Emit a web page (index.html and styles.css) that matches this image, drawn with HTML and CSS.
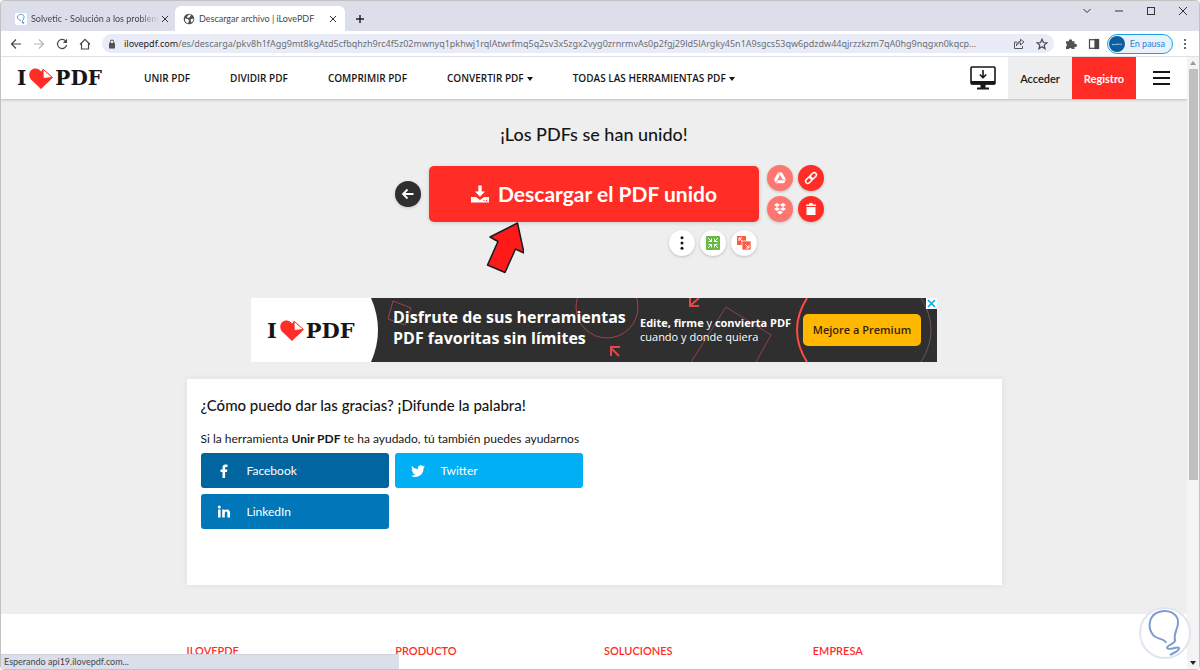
FILE: index.html
```
<!DOCTYPE html>
<html lang="es">
<head>
    <meta charset="UTF-8">
    <meta name="viewport" content="width=device-width, initial-scale=1.0">
    <title>Descargar archivo | iLovePDF</title>
    <link rel="stylesheet" href="styles.css">
</head>
<body>
    <div class="browser">
        <!-- Tabs -->
        <div class="tab-bar">
            <div class="tab">
                <svg class="tab-icon" viewBox="0 0 12 12"><rect width="12" height="12" rx="2" fill="#fff"/><path d="M7.500 8.500C7.500 6.500 9.500 6 9 3.500C8.500 0.500 3 0.500 2.500 4C2 7 5 6.500 6 8M7.500 8.500L7 9.500L9 9.500L8 11" fill="none" stroke="#5a9bd0"/></svg>
                <button class="tab-title tab-title-fade">Solvetic - Solución a los problem</button>
                <button class="tab-close" aria-label="Cerrar"><svg viewBox="0 0 8 8"><path d="M1 1L7 7M7 1L1 7"/></svg></button>
            </div>
            <div class="tab tab-active">
                <svg class="tab-icon" viewBox="0 0 12 12"><circle cx="6" cy="6" r="5.300" fill="#4a4d51"/><path d="M2 5.500L5 6L6 8L5 10.500C3 10 1.600 8 2 5.500ZM6 1.500L8 2L7 4L5 5L3.800 4ZM8 6L10.500 5.500C10.600 7.500 9.500 9 8.500 9.500L7.500 7.500Z" fill="#fff"/></svg>
                <button class="tab-title">Descargar archivo | iLovePDF</button>
                <button class="tab-close" aria-label="Cerrar"><svg viewBox="0 0 8 8"><path d="M1 1L7 7M7 1L1 7"/></svg></button>
            </div>
            <button class="tab-new" aria-label="Nueva pestaña"><svg viewBox="0 0 10 10"><path d="M5 1V9M1 5H9"/></svg></button>
            <div class="window-buttons">
                <button aria-label="Buscar pestañas"><svg viewBox="0 0 10 10"><path d="M1.500 3L5 6.500L8.500 3"/></svg></button>
                <button aria-label="Minimizar"><svg viewBox="0 0 10 10"><path d="M1 5H9"/></svg></button>
                <button aria-label="Maximizar"><svg viewBox="0 0 10 10"><rect x="1.500" y="1.500" width="7" height="7"/></svg></button>
                <button aria-label="Cerrar ventana"><svg viewBox="0 0 10 10"><path d="M1 1L9 9M9 1L1 9"/></svg></button>
            </div>
        </div>

        <!-- Toolbar -->
        <div class="toolbar">
            <button class="tool" aria-label="Atrás"><svg viewBox="0 0 12 12"><path d="M11 6H1.500M6 1.500L1.500 6L6 10.500"/></svg></button>
            <button class="tool tool-off" aria-label="Adelante"><svg viewBox="0 0 12 12"><path d="M1 6H10.500M6 1.500L10.500 6L6 10.500"/></svg></button>
            <button class="tool" aria-label="Recargar"><svg viewBox="0 0 12 12"><path d="M10 3.500A4.600 4.600 0 1 0 10.600 7"/><path d="M11 0.800V5H6.800Z" fill="#45484c" stroke="none"/></svg></button>
            <button class="tool" aria-label="Inicio"><svg viewBox="0 0 12 12"><path d="M1 6.500L6 1.300L11 6.500M2.500 5.500V11H9.500V5.500"/></svg></button>
            <div class="address">
                <svg class="lock" viewBox="0 0 8 10"><rect x="1" y="4" width="6" height="5.500" rx="0.600" fill="#505357"/><path d="M2.300 4V2.700A1.700 1.700 0 0 1 5.700 2.700V4" fill="none" stroke="#505357"/></svg>
                <label class="domain" for="url">ilovepdf.com</label>
                <input class="url" id="url" type="text" value="/es/descarga/pkv8h1fAgg9mt8kgAtd5cfbqhzh9rc4f5z02mwnyq1pkhwj1rqlAtwrfmq5q2sv3x5zgx2vyg0zrnrmvAs0p2fgj29ld5lArgky45n1A9sgcs53qw6pdzdw44qjrzzkzm7qA0hg9nqgxn0kqcp...">
                <button class="tool" aria-label="Compartir"><svg viewBox="0 0 12 12"><path d="M4 4H1.500V10.500H9.500V8M3.500 8C4 5.500 5.500 4.800 7.500 4.800V7L11 4L7.500 1.300V3.300C5 3.500 3.500 5 3.500 8Z" stroke-width="0.900"/></svg></button>
                <button class="tool" aria-label="Favoritos"><svg viewBox="0 0 12 12"><path d="M6 1.300L7.400 4.500L10.900 4.800L8.200 7.100L9 10.600L6 8.700L3 10.600L3.800 7.100L1.100 4.800L4.600 4.500Z"/></svg></button>
            </div>
            <button class="tool" aria-label="Extensiones"><svg viewBox="0 0 12 12"><path d="M1 3.300H4A1.600 1.600 0 1 1 7 3.300H9.500V6A1.600 1.600 0 1 1 9.500 8.700V11H6.800A1.500 1.500 0 0 0 3.900 11H1V8.400A1.500 1.500 0 0 0 1 5.600Z" fill="#505357" stroke="none"/></svg></button>
            <button class="tool" aria-label="Panel lateral"><svg viewBox="0 0 12 12"><rect x="1.500" y="1.700" width="9" height="8.600"/><rect x="7" y="1.500" width="3.500" height="9" fill="#45484c"/></svg></button>
            <button class="profile">
                <svg viewBox="0 0 16 16"><circle cx="8" cy="8" r="8" fill="#0b5f9e"/><path d="M3 9C5 7.500 6 9 8 8.300S11 9 13 8" stroke="#a9cdea" fill="none"/></svg>
                En pausa
            </button>
            <button class="tool tool-dots" aria-label="Menú"><svg viewBox="0 0 12 12"><g fill="#45484c" stroke="none"><circle cx="6" cy="2" r="1.100"/><circle cx="6" cy="6" r="1.100"/><circle cx="6" cy="10" r="1.100"/></g></svg></button>
        </div>

        <div class="viewport">
            <div class="page">
                <header class="header">
                    <a class="logo" href="#">I<svg viewBox="0 0 24 21"><path d="M12 21L2 11.500C-1 8 0 2 4.500 0.700C8 -0.200 11 1.500 12 3.500L14 1.200L23.500 9.500C22 12 18 15 12 21Z" fill="#ff2d26"/><path d="M14 1.200L23.500 9.500L14.200 10.500Z" fill="#fff" stroke="#ff2d26"/></svg>PDF</a>
                    <nav class="nav">
                        <a href="#">UNIR PDF</a>
                        <a href="#">DIVIDIR PDF</a>
                        <a href="#">COMPRIMIR PDF</a>
                        <a class="nav-menu" href="#">CONVERTIR PDF</a>
                        <a class="nav-menu" href="#">TODAS LAS HERRAMIENTAS PDF</a>
                    </nav>
                    <a class="desktop-link" href="#" aria-label="Aplicación de escritorio"><svg viewBox="0 0 26 24"><rect x="1" y="1" width="24" height="17" rx="1" fill="none" stroke="#161616" stroke-width="1.600"/><path d="M1 15H25V18.500H1ZM10.500 18H15.500V21.500H19V23.500H7V21.500H10.500Z" fill="#161616"/><path d="M13 4V11.500M9.800 8.500L13 11.700L16.200 8.500" fill="none" stroke="#161616" stroke-width="1.600"/></svg></a>
                    <a class="login" href="#">Acceder</a>
                    <a class="signup" href="#">Registro</a>
                    <button class="burger" aria-label="Menú"><span></span><span></span><span></span></button>
                </header>

                <main class="main">
                    <h1 class="title">¡Los PDFs se han unido!</h1>

                    <div class="download">
                        <a class="circle circle-dark back" href="#" aria-label="Volver"><svg viewBox="0 0 14 14"><path d="M12.500 7H2M6.500 2.500L2 7L6.500 11.500" fill="none" stroke="#fff" stroke-width="1.800"/></svg></a>
                        <div class="download-box">
                            <a class="download-btn" href="#">
                                <svg viewBox="0 0 18 18"><path d="M7.300 0.500H10.700V6.500H14L9 11.700L4 6.500H7.300Z" fill="#fff"/><path d="M0 12H5L9 15L13 12H18V17.500H0Z" fill="#fff"/><path d="M12.500 15.500H13.500M15 15.500H16" stroke="#ff2d26"/></svg>
                                Descargar el PDF unido
                            </a>
                            <svg class="pointer" viewBox="0 0 38 52"><path d="M31.500 1L38 31L29.500 27L19 50.500L1.500 43L12 19.500L4 15Z" fill="#ff1a1a" stroke="#141c26" stroke-width="1.500" stroke-linejoin="round"/></svg>
                        </div>
                        <div class="side-actions">
                            <a class="circle circle-pale" href="#" aria-label="Google Drive"><svg viewBox="0 0 14 14"><path d="M5 1.500H9L13 8.500L11 12.300H3L1 8.500Z" fill="#fff"/><path d="M7 5L9 8.400H5ZM5.300 2L9.300 8.800M4.800 8.900H12.500M4.800 8.500L3 12" fill="#ff7671" stroke="#ff7671" stroke-width="0.700"/></svg></a>
                            <a class="circle circle-red" href="#" aria-label="Copiar enlace"><svg viewBox="0 0 14 14"><g fill="none" stroke="#fff" stroke-width="1.500" transform="rotate(-45 7 7)"><rect x="0.300" y="4.800" width="7.400" height="4.400" rx="2.200"/><rect x="6.300" y="4.800" width="7.400" height="4.400" rx="2.200"/></g></svg></a>
                            <a class="circle circle-pale" href="#" aria-label="Dropbox"><svg viewBox="0 0 14 14"><path d="M4 1L7 3L4 5L1 3ZM10 1L13 3L10 5L7 3ZM4 5L7 7L4 9L1 7ZM10 5L13 7L10 9L7 7ZM7 8.500L10 10.300L7 12.500L4 10.300Z" fill="#fff"/></svg></a>
                            <a class="circle circle-red" href="#" aria-label="Eliminar"><svg viewBox="0 0 14 14"><path d="M2 2.500H5L5.500 1H8.500L9 2.500H12V4H2ZM2.500 5H11.500V13H2.500Z" fill="#fff"/></svg></a>
                        </div>
                        <div class="more-actions">
                            <button class="circle" aria-label="Más"><svg viewBox="0 0 14 14"><g fill="#161616"><circle cx="7" cy="1.700" r="1.500"/><circle cx="7" cy="7" r="1.500"/><circle cx="7" cy="12.300" r="1.500"/></g></svg></button>
                            <a class="circle" href="#" aria-label="Comprimir PDF"><svg viewBox="0 0 14 14"><rect width="14" height="14" rx="1" fill="#68b946"/><path d="M2 2L5.500 5.500M5.500 2.500V5.500H2.500M12 2L8.500 5.500M8.500 2.500V5.500H11.500M2 12L5.500 8.500M2.500 8.500H5.500V11.500M12 12L8.500 8.500M11.500 8.500H8.500V11.500" fill="none" stroke="#fff"/></svg></a>
                            <a class="circle" href="#" aria-label="Unir PDF"><svg viewBox="0 0 14 14"><rect width="9" height="9" fill="#ff5b43"/><rect x="5" y="5" width="9" height="9" fill="#ff5b43" stroke="#fff" stroke-width="0.700"/><path d="M2 5V2H5M2 2L5 5M12 9V12H9M8.500 8.500L12 12" fill="none" stroke="#fff"/></svg></a>
                        </div>
                    </div>

                    <aside class="banner">
                        <svg class="banner-art" viewBox="0 0 686 64" fill="none">
                            <path d="M0 0H120Q134 32 120 64H0Z" fill="#fff"/>
                            <path d="M142 3L160 10L154 27L137 21Z" stroke="#a3414b"/>
                            <circle cx="356" cy="9" r="31" stroke="#a3414b"/>
                            <path d="M440 64L475 9L520 37L505 64" stroke="#91404d"/>
                            <path d="M670 0Q690 32 670 64" stroke="#6b5560"/>
                            <path d="M556 0Q536 32 556 64" stroke="#ff4a43" stroke-width="2"/>
                            <path d="M439 0V8H448M440 7L448 0M368 58L360 50V58M359 49H369" stroke="#e0484b" stroke-width="2"/>
                        </svg>
                        <a class="logo banner-logo" href="#">I<svg viewBox="0 0 24 21"><path d="M12 21L2 11.500C-1 8 0 2 4.500 0.700C8 -0.200 11 1.500 12 3.500L14 1.200L23.500 9.500C22 12 18 15 12 21Z" fill="#ff2d26"/><path d="M14 1.200L23.500 9.500L14.200 10.500Z" fill="#fff" stroke="#ff2d26"/></svg>PDF</a>
                        <p class="banner-title">Disfrute de sus herramientas<br>PDF favoritas sin límites</p>
                        <p class="banner-text"><b>Edite, firme</b> y <b>convierta PDF</b><br>cuando y donde quiera</p>
                        <a class="banner-btn" href="#">Mejore a Premium</a>
                        <button class="banner-close" aria-label="Cerrar anuncio"><svg viewBox="0 0 11 11"><path d="M2 2L9 9M9 2L2 9" stroke="#00aeef" stroke-width="1.600"/></svg></button>
                    </aside>

                    <section class="share">
                        <h2>¿Cómo puedo dar las gracias? ¡Difunde la palabra!</h2>
                        <p>Si la herramienta <b>Unir PDF</b> te ha ayudado, tú también puedes ayudarnos</p>
                        <div class="share-links">
                            <a class="share-link facebook" href="#"><svg viewBox="0 0 14 14"><path d="M5.500 14V8H3.500V5.400H5.500V3.700C5.500 1.500 6.700 0.500 8.600 0.500H10.500V2.900H9.300C8.400 2.900 8.100 3.300 8.100 4V5.400H10.400L10 8H8.100V14Z" fill="#fff"/></svg>Facebook</a>
                            <a class="share-link twitter" href="#"><svg viewBox="0 0 14 14"><path d="M14 2.600L12.600 4C12.700 9 9 13 4.300 13C2.700 13 1.200 12.500 0 11.700C1.500 11.800 3 11.400 4.200 10.500C3 10.400 2 9.700 1.600 8.500H2.800C1.500 8.100 0.600 7 0.600 5.600L1.900 6C0.600 5 0.200 3.400 1 2.100C2.500 3.900 4.500 5 6.900 5.100C6.500 3 8 1.300 9.800 1.300C10.600 1.300 11.400 1.600 11.900 2.200L13.700 1.500C13.500 2.100 13 2.700 12.500 3Z" fill="#fff"/></svg>Twitter</a>
                            <a class="share-link linkedin" href="#"><svg viewBox="0 0 14 14"><path d="M1 4.500H3.600V12.500H1ZM5.200 4.500H7.700V5.600C8.800 3.800 13 3.900 13 7.500V12.500H10.400V8.200C10.400 6 7.800 6.200 7.800 8.200V12.500H5.200Z" fill="#fff"/><circle cx="2.300" cy="2" r="1.500" fill="#fff"/></svg>LinkedIn</a>
                        </div>
                    </section>
                </main>

                <footer class="footer">
                    <h3>ILOVEPDF</h3>
                    <h3>PRODUCTO</h3>
                    <h3>SOLUCIONES</h3>
                    <h3>EMPRESA</h3>
                </footer>
            </div>
            <div class="scrollbar">
                <span class="scroll-up"></span>
                <span class="scroll-thumb"></span>
                <span class="scroll-down"></span>
            </div>
        </div>

        <div class="status">Esperando api19.ilovepdf.com...</div>
        <svg class="watermark" viewBox="0 0 52 52"><circle cx="26" cy="26" r="25" fill="#fff" stroke="#e2e5f1" stroke-width="2"/><path d="M27 36C26 31 18 33 14 28C8 20 10 8 20 5C29 2 38 6 39 14C40 22 34 24 36 34C35 37 28 38 28 41C30 44 38 39 40 41C41 44 34 46 31 48" fill="none" stroke="#7d9bd0" stroke-width="2"/></svg>
    </div>
</body>
</html>
```
FILE: styles.css
```
* {
    margin: 0;
    padding: 0;
    box-sizing: border-box;
}

body {
    font-family: 'Lato', sans-serif;
    color: #161616;
    background: #fff;
}

a {
    color: inherit;
    text-decoration: none;
}

button {
    background: none;
    border: none;
    color: inherit;
    font: inherit;
    cursor: pointer;
}

svg {
    display: block;
    flex: none;
}

.browser {
    position: relative;
    display: flex;
    flex-direction: column;
    height: 100vh;
    border: 1px solid #c2c2c2;
    border-radius: 4px;
    overflow: hidden;
}

/* Tabs */
.tab-bar,
.toolbar,
.status {
    color: #45484c;
}

.tab-bar {
    display: flex;
    align-items: flex-end;
    height: 30px;
    flex: none;
    background: #dcdeea;
}

.tab {
    display: flex;
    align-items: center;
    width: 174px;
    height: 25px;
    padding: 0 6px 0 14px;
    font-size: 9px;
}

.tab-active {
    width: 170px;
    padding: 0 8px;
    border-radius: 6px 6px 0 0;
    background: #fff;
}

.tab-icon {
    width: 12px;
    height: 12px;
    margin-right: 4px;
}

.tab-title {
    flex: 1;
    text-align: left;
    white-space: nowrap;
}

.tab-title-fade {
    mask-image: linear-gradient(to right, #000 85%, transparent);
}

.tab-close {
    padding: 4px 0 4px 2px;
}

.tab-close svg {
    width: 8px;
    height: 8px;
    stroke: #333;
}

.tab-new {
    align-self: center;
    margin: 6px 10px 0;
}

.tab-new svg {
    width: 10px;
    height: 10px;
    stroke: #222;
    stroke-width: 1.5;
}

.window-buttons {
    display: flex;
    align-self: flex-start;
    gap: 22px;
    margin-left: auto;
    padding: 5px 11px 0 0;
}

.window-buttons svg {
    width: 10px;
    height: 10px;
    fill: none;
    stroke: #333;
}

/* Toolbar */
.toolbar {
    display: flex;
    align-items: center;
    gap: 11px;
    height: 26px;
    flex: none;
    padding: 0 8px 0 9px;
    border-bottom: 1px solid #dfe1e8;
    background: #fff;
}

.tool svg {
    width: 12px;
    height: 12px;
    fill: none;
    stroke: #45484c;
    stroke-width: 1.2;
}

.tool-off {
    opacity: 0.4;
}

.tool-dots {
    margin-left: -5px;
}

.address {
    flex: 1;
    display: flex;
    align-items: center;
    height: 19px;
    padding: 0 6px;
    border-radius: 10px;
    background: #e9ecf7;
    font-family: 'Noto Sans', sans-serif;
    font-size: 9px;
}

.lock {
    width: 8px;
    height: 10px;
    margin-right: 8px;
}

.domain {
    color: #202124;
}

.url {
    flex: 1;
    min-width: 0;
    border: none;
    outline: none;
    background: none;
    color: #6b6e73;
    font: inherit;
}

.address .tool {
    margin-left: 11px;
}

.profile {
    display: flex;
    align-items: center;
    gap: 5px;
    height: 20px;
    margin-left: -4px;
    padding: 0 7px 0 1px;
    border: 1px solid #1ba1e8;
    border-radius: 10px;
    background: #e9f1fb;
    color: #1a86d8;
    font-size: 9px;
}

.profile svg {
    width: 16px;
    height: 16px;
}

/* Page */
.viewport {
    flex: 1;
    display: flex;
    min-height: 0;
}

.page {
    flex: 1;
    overflow: hidden;
}

.header {
    position: relative;
    display: flex;
    align-items: center;
    height: 43px;
    padding-left: 16px;
    border-bottom: 1px solid #ccc;
    background: #fff;
    box-shadow: 0 1px 2px rgba(0, 0, 0, 0.1);
    font-size: 11px;
    font-weight: 600;
}

.logo {
    display: flex;
    align-items: center;
    font-family: 'DejaVu Serif', serif;
    font-size: 20px;
    font-weight: bold;
}

.logo svg {
    width: 24px;
    height: 21px;
    margin: 0 2px 0 3px;
}

.nav {
    display: flex;
    gap: 40px;
    margin-left: 42px;
    font-family: 'Open Sans', sans-serif;
    font-size: 10px;
    white-space: nowrap;
}

.nav-menu::after {
    content: '';
    display: inline-block;
    margin-left: 3px;
    border: 3px solid transparent;
    border-top: 4px solid #161616;
    border-bottom: none;
    vertical-align: middle;
}

.desktop-link {
    margin-left: auto;
    padding-right: 12px;
}

.desktop-link svg {
    width: 26px;
    height: 24px;
}

.login,
.signup {
    display: flex;
    align-items: center;
    justify-content: center;
    width: 64px;
    height: 42px;
    background: #eee;
}

.signup {
    background: #ff2d26;
    color: #fff;
    font-weight: bold;
}

.burger {
    display: grid;
    gap: 4px;
    padding: 0 17px;
}

.burger span {
    width: 17px;
    height: 2px;
    background: #161616;
}

.main {
    padding: 24px 16px 29px;
    background: #eee;
}

.title {
    margin-bottom: 21px;
    font-size: 18px;
    font-weight: 500;
    line-height: 20px;
    text-align: center;
}

/* Download */
.download {
    display: grid;
    grid-template-columns: 1fr 330px 1fr;
    align-items: center;
    gap: 8px;
}

.back {
    justify-self: end;
}

.download-box {
    position: relative;
}

.download-btn {
    display: flex;
    align-items: center;
    justify-content: center;
    gap: 9px;
    height: 56px;
    border-radius: 5px;
    background: #ff2d26;
    box-shadow: 0 1px 4px rgba(0, 0, 0, 0.15);
    color: #fff;
    font-size: 21px;
    font-weight: bold;
}

.download-btn svg {
    width: 18px;
    height: 18px;
}

.pointer {
    position: absolute;
    top: 56px;
    left: 57px;
    width: 38px;
    height: 52px;
}

.side-actions {
    display: grid;
    grid-template-columns: 26px 26px;
    gap: 5px;
}

.more-actions {
    grid-column: 2;
    display: flex;
    justify-content: flex-end;
    gap: 5px;
    padding-right: 2px;
}

.circle {
    display: grid;
    place-items: center;
    width: 26px;
    height: 26px;
    border-radius: 50%;
    background: #fff;
    box-shadow: 0 1px 3px rgba(0, 0, 0, 0.2);
}

.circle svg {
    width: 14px;
    height: 14px;
}

.circle-dark {
    background: #2f2f2f;
}

.circle-red {
    background: #ff2d26;
}

.circle-pale {
    background: #ff7671;
}

/* Banner */
.banner {
    position: relative;
    display: flex;
    align-items: center;
    max-width: 686px;
    height: 64px;
    margin: 42px auto 17px;
    padding: 0 16px;
    background: #2f2f2f;
    color: #fff;
    font-family: 'Open Sans', sans-serif;
}

.banner-art {
    position: absolute;
    inset: 0;
    width: 100%;
    height: 100%;
}

.banner > a,
.banner > p {
    position: relative;
}

.banner-logo {
    width: 126px;
    color: #161616;
    font-size: 21px;
}

.banner-title {
    width: 247px;
    padding-bottom: 4px;
    font-size: 16px;
    font-weight: bold;
    line-height: 21px;
    white-space: nowrap;
}

.banner-text {
    font-size: 11px;
    line-height: 14px;
    white-space: nowrap;
}

.banner-btn {
    margin-left: auto;
    width: 118px;
    border-radius: 5px;
    background: #ffb700;
    color: #33230b;
    font-size: 11px;
    font-weight: 600;
    line-height: 32px;
    text-align: center;
}

.banner-close {
    position: absolute;
    top: 0;
    right: 0;
    background: #fff;
}

.banner-close svg {
    width: 11px;
    height: 11px;
}

/* Share */
.share {
    max-width: 815px;
    min-height: 206px;
    margin: 0 auto;
    padding: 16px 14px;
    background: #fff;
    box-shadow: 0 0 6px rgba(190, 160, 110, 0.2);
}

.share h2 {
    margin-bottom: 14px;
    font-size: 15px;
    font-weight: 500;
    line-height: 20px;
}

.share p {
    margin-bottom: 4px;
    font-size: 12px;
    line-height: 20px;
}

.share-links {
    display: grid;
    grid-template-columns: 188px 188px;
    gap: 6px;
}

.share-link {
    display: flex;
    align-items: center;
    gap: 16px;
    height: 35px;
    padding-left: 16px;
    border-radius: 3px;
    color: #fff;
    font-size: 12px;
}

.share-link svg {
    width: 14px;
    height: 14px;
}

.facebook {
    background: #01669f;
}

.twitter {
    background: #00aff4;
}

.linkedin {
    background: #0077b9;
}

.footer {
    display: grid;
    grid-template-columns: repeat(4, 1fr);
    gap: 20px;
    max-width: 815px;
    margin: 0 auto;
    padding-top: 27px;
}

.footer h3 {
    color: #ff2d26;
    font-size: 11px;
    font-weight: 600;
    line-height: 20px;
}

/* Scrollbar */
.scrollbar {
    display: flex;
    flex-direction: column;
    align-items: center;
    width: 12px;
    padding: 4px 0;
    background: #f4f4f4;
}

.scroll-up,
.scroll-down {
    border: 3px solid transparent;
    border-top: none;
    border-bottom: 4px solid #999;
}

.scroll-thumb {
    width: 9px;
    height: 68%;
    margin: 4px 0 auto;
    background: #c0c0c0;
}

.scroll-down {
    border-top: 4px solid #222;
    border-bottom: none;
}

/* Overlays */
.status {
    position: absolute;
    left: 0;
    bottom: 0;
    width: 398px;
    padding-left: 3px;
    border-top: 1px solid #d0d2dc;
    background: #dcdeea;
    font-size: 9px;
    line-height: 14px;
}

.watermark {
    position: absolute;
    right: 8px;
    bottom: 10px;
    width: 52px;
    height: 52px;
}
```
